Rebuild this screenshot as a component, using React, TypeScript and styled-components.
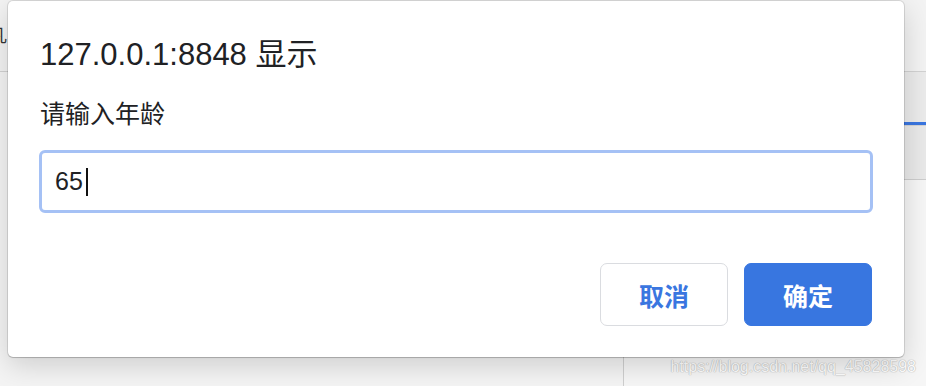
import React from "react";
import styled, { createGlobalStyle } from "styled-components";

const GlobalStyle = createGlobalStyle`
  html, body {
    margin: 0;
    padding: 0;
    background: #f7f7f7;
  }
  body {
    font-family: "Liberation Sans", "Noto Sans CJK SC", sans-serif;
    color: #202124;
  }
`;

const Page = styled.div`
  position: relative;
  width: 926px;
  height: 386px;
  overflow: hidden;
  display: flex;
  flex-direction: column;
  background: #f6f6f6;
`;

const Header = styled.div`
  height: 72px;
  flex-shrink: 0;
  box-sizing: border-box;
  padding-top: 24px;
  border-bottom: 1px solid #d2d2d2;
  background: #f3f3f3;
  font-size: 18px;
  line-height: 24px;
  color: #333;
`;

const HeaderText = styled.span`
  display: inline-block;
  margin-left: -11px;
`;

const Body = styled.div`
  flex: 1;
  display: flex;
`;

const MainColumn = styled.div`
  width: 623px;
  border-right: 1px solid #cfcfcf;
  background: #f4f4f4;
`;

const SideColumn = styled.div`
  flex: 1;
  display: flex;
  flex-direction: column;
`;

const TabRow = styled.div`
  height: 53px;
  display: flex;
  justify-content: flex-end;
  align-items: flex-end;
  background: #ebebeb;
`;

const ActiveTab = styled.div`
  width: 70px;
  height: 3px;
  background: #3a76e0;
`;

const SubRow = styled.div`
  height: 53px;
  border-top: 1px solid #d4d4d4;
  border-bottom: 1px solid #cdcdcd;
  background: #e9e9e9;
`;

const Watermark = styled.div`
  position: absolute;
  right: 10px;
  bottom: 11px;
  font-size: 16px;
  line-height: 16px;
  color: #ffffff;
  text-shadow: 0 0 1px #b5b5b5, 0 0 1px #b5b5b5;
`;

const Dialog = styled.div`
  position: absolute;
  top: 1px;
  left: 8px;
  width: 896px;
  box-sizing: border-box;
  padding: 36px 32px 31px;
  display: flex;
  flex-direction: column;
  background: #ffffff;
  border-radius: 5px;
  box-shadow: 0 0 0 1px rgba(0, 0, 0, 0.1), 0 1px 1px rgba(0, 0, 0, 0.15),
    0 8px 28px rgba(0, 0, 0, 0.16);
`;

const Title = styled.div`
  font-size: 31px;
  line-height: 36px;
  color: #202124;
`;

const Message = styled.div`
  margin-top: 26px;
  font-size: 25px;
  line-height: 30px;
  color: #202124;
`;

const InputBox = styled.div`
  margin: 21px -1px 0;
  height: 63px;
  box-sizing: border-box;
  padding-left: 13px;
  display: flex;
  align-items: center;
  border: 3px solid #a5c1f5;
  border-radius: 6px;
  font-size: 25px;
  color: #202124;
`;

const Caret = styled.span`
  display: inline-block;
  width: 2px;
  height: 28px;
  margin-left: 3px;
  background: #111;
`;

const Actions = styled.div`
  margin-top: 50px;
  display: flex;
  justify-content: flex-end;
  gap: 16px;
`;

const Button = styled.button<{ $primary?: boolean }>`
  width: 128px;
  height: 63px;
  box-sizing: border-box;
  border-radius: 7px;
  border: 1px solid ${(p) => (p.$primary ? "#3876e0" : "#dadce0")};
  background: ${(p) => (p.$primary ? "#3876e0" : "#ffffff")};
  color: ${(p) => (p.$primary ? "#ffffff" : "#3a76e0")};
  font-family: "Liberation Sans", "Noto Sans CJK SC", sans-serif;
  font-size: 25px;
  font-weight: 700;
  padding: 0;
  cursor: pointer;
`;

export default function App() {
  return (
    <>
      <GlobalStyle />
      <Page>
        <Header>
          <HeaderText>凡</HeaderText>
        </Header>
        <Body>
          <MainColumn />
          <SideColumn>
            <TabRow>
              <ActiveTab />
            </TabRow>
            <SubRow />
          </SideColumn>
        </Body>
        <Watermark>https://blog.csdn.net/qq_45828598</Watermark>
        <Dialog>
          <Title>127.0.0.1:8848 显示</Title>
          <Message>请输入年龄</Message>
          <InputBox>
            65
            <Caret />
          </InputBox>
          <Actions>
            <Button>取消</Button>
            <Button $primary>确定</Button>
          </Actions>
        </Dialog>
      </Page>
    </>
  );
}
